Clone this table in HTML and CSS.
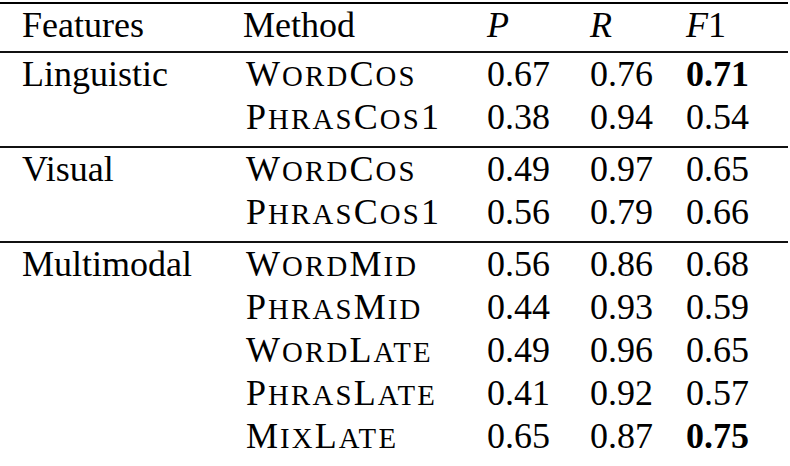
FILE: index.html
```html
<!DOCTYPE html>
<html>
<head>
<meta charset="utf-8">
<link rel="stylesheet" href="styles.css">
</head>
<body>
<table class="results">
  <colgroup>
    <col class="c-feat"><col class="c-method"><col class="c-p"><col class="c-r"><col class="c-f">
  </colgroup>
  <thead>
    <tr class="last">
      <th>Features</th><th>Method</th><th><i>P</i></th><th><i>R</i></th><th><i>F</i>1</th>
    </tr>
  </thead>
  <tbody>
    <tr><td>Linguistic</td><td class="sc">W<span class="s">ord</span>C<span class="s">os</span></td><td>0.67</td><td>0.76</td><td class="best">0.71</td></tr>
    <tr class="last"><td></td><td class="sc">P<span class="s">hras</span>C<span class="s">os</span>1</td><td>0.38</td><td>0.94</td><td>0.54</td></tr>
  </tbody>
  <tbody>
    <tr><td>Visual</td><td class="sc">W<span class="s">ord</span>C<span class="s">os</span></td><td>0.49</td><td>0.97</td><td>0.65</td></tr>
    <tr class="last"><td></td><td class="sc">P<span class="s">hras</span>C<span class="s">os</span>1</td><td>0.56</td><td>0.79</td><td>0.66</td></tr>
  </tbody>
  <tbody>
    <tr><td>Multimodal</td><td class="sc">W<span class="s">ord</span>M<span class="s">id</span></td><td>0.56</td><td>0.86</td><td>0.68</td></tr>
    <tr><td></td><td class="sc">P<span class="s">hras</span>M<span class="s">id</span></td><td>0.44</td><td>0.93</td><td>0.59</td></tr>
    <tr><td></td><td class="sc">W<span class="s">ord</span>L<span class="s">ate</span></td><td>0.49</td><td>0.96</td><td>0.65</td></tr>
    <tr><td></td><td class="sc">P<span class="s">hras</span>L<span class="s">ate</span></td><td>0.41</td><td>0.92</td><td>0.57</td></tr>
    <tr class="last"><td></td><td class="sc">M<span class="s">ix</span>L<span class="s">ate</span></td><td>0.65</td><td>0.87</td><td class="best">0.75</td></tr>
  </tbody>
</table>
</body>
</html>
```

FILE: styles.css
```css
html, body {
  margin: 0;
  padding: 0;
  background: #fff;
}
body {
  padding-top: 2px;
}
.results {
  width: 788px;
  border-collapse: collapse;
  table-layout: fixed;
  font-family: "Liberation Serif", "Times New Roman", serif;
  font-size: 36px;
  color: #000;
}
.c-feat { width: 243px; }
.c-method { width: 244px; }
.c-p { width: 103px; }
.c-r { width: 96px; }
.c-f { width: auto; }

.results th,
.results td {
  padding: 0;
  height: 43px;
  line-height: 43px;
  text-align: left;
  font-weight: normal;
  white-space: nowrap;
  vertical-align: top;
}
.results th:first-child,
.results td:first-child {
  padding-left: 22px;
}
.results td.sc {
  padding-left: 3px;
}
.results thead {
  border-top: 2px solid #000;
}
.results tbody {
  border-top: 2px solid #111;
}
.results thead tr.last th {
  padding-bottom: 4px;
}
.results tbody tr.last td {
  padding-bottom: 7px;
}
.results i {
  font-style: italic;
}
.sc {
  letter-spacing: 2px;
}
.sc .s {
  text-transform: uppercase;
  font-size: 0.8em;
  line-height: 1;
  letter-spacing: 2.2px;
}
.best {
  font-weight: bold !important;
}
```
